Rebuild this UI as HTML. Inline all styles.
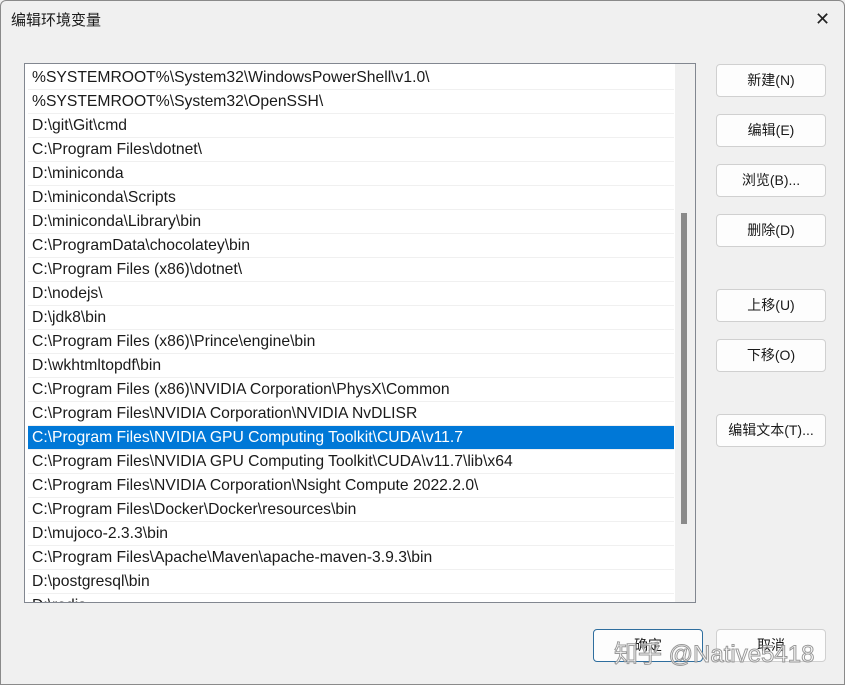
<html><head><style>
body{margin:0;width:845px;height:685px;background:#f0f0f0;font-family:"Liberation Sans","Noto Sans CJK SC",sans-serif;position:relative;overflow:hidden}
.win{position:absolute;left:0;top:0;width:843px;height:683px;border:1px solid #8a8a8a;border-radius:6px 6px 0 0;background:#f0f0f0}
.title{position:absolute;left:10px;top:8px;font-size:15px;color:#1a1a1a}
.close{position:absolute;left:814px;top:8px;font-size:18px;color:#222}
.list{position:absolute;left:23px;top:62px;width:670px;height:538px;border:1px solid #828790;background:#fff;overflow:hidden}
.row{position:absolute;left:3px;width:646px;height:24px;border-bottom:1px solid #f0f0f0;font-size:15.7px;line-height:23px;padding-left:4px;color:#1a1a1a;white-space:nowrap;box-sizing:border-box}
.sel{background:#0078d7;color:#fff}
.sb{position:absolute;left:650px;top:0;width:20px;height:538px;background:#f0f0f0}
.thumb{position:absolute;left:656px;top:149px;width:6px;height:311px;background:#8a8a8a}
.btn{position:absolute;left:715px;width:108px;height:31px;border:1px solid #d0d0d0;border-radius:4px;background:#fdfdfd;font-size:14px;line-height:31px;text-align:center;color:#1a1a1a;box-sizing:content-box}
.ok{left:592px;border:1px solid #2f6e9e}
.wm{position:absolute;left:613px;top:633px;font-size:24px;color:rgba(255,255,255,.7);-webkit-text-stroke:1px #999}
</style></head><body><div class="win">
<div class="title">编辑环境变量</div><div class="close">✕</div>
<div class="list">
<div class="row" style="top:2px">%SYSTEMROOT%\System32\WindowsPowerShell\v1.0\</div>
<div class="row" style="top:26px">%SYSTEMROOT%\System32\OpenSSH\</div>
<div class="row" style="top:50px">D:\git\Git\cmd</div>
<div class="row" style="top:74px">C:\Program Files\dotnet\</div>
<div class="row" style="top:98px">D:\miniconda</div>
<div class="row" style="top:122px">D:\miniconda\Scripts</div>
<div class="row" style="top:146px">D:\miniconda\Library\bin</div>
<div class="row" style="top:170px">C:\ProgramData\chocolatey\bin</div>
<div class="row" style="top:194px">C:\Program Files (x86)\dotnet\</div>
<div class="row" style="top:218px">D:\nodejs\</div>
<div class="row" style="top:242px">D:\jdk8\bin</div>
<div class="row" style="top:266px">C:\Program Files (x86)\Prince\engine\bin</div>
<div class="row" style="top:290px">D:\wkhtmltopdf\bin</div>
<div class="row" style="top:314px">C:\Program Files (x86)\NVIDIA Corporation\PhysX\Common</div>
<div class="row" style="top:338px">C:\Program Files\NVIDIA Corporation\NVIDIA NvDLISR</div>
<div class="row sel" style="top:362px">C:\Program Files\NVIDIA GPU Computing Toolkit\CUDA\v11.7</div>
<div class="row" style="top:386px">C:\Program Files\NVIDIA GPU Computing Toolkit\CUDA\v11.7\lib\x64</div>
<div class="row" style="top:410px">C:\Program Files\NVIDIA Corporation\Nsight Compute 2022.2.0\</div>
<div class="row" style="top:434px">C:\Program Files\Docker\Docker\resources\bin</div>
<div class="row" style="top:458px">D:\mujoco-2.3.3\bin</div>
<div class="row" style="top:482px">C:\Program Files\Apache\Maven\apache-maven-3.9.3\bin</div>
<div class="row" style="top:506px">D:\postgresql\bin</div>
<div class="row" style="top:530px">D:\redis</div>
<div class="sb"></div><div class="thumb"></div>
</div>
<div class="btn" style="top:63px">新建(N)</div>
<div class="btn" style="top:113px">编辑(E)</div>
<div class="btn" style="top:163px">浏览(B)...</div>
<div class="btn" style="top:213px">删除(D)</div>
<div class="btn" style="top:288px">上移(U)</div>
<div class="btn" style="top:338px">下移(O)</div>
<div class="btn" style="top:413px">编辑文本(T)...</div>
<div class="btn ok" style="top:628px">确定</div>
<div class="btn" style="top:628px">取消</div>
<div class="wm">知乎 @Native5418</div>
</div></body></html>
